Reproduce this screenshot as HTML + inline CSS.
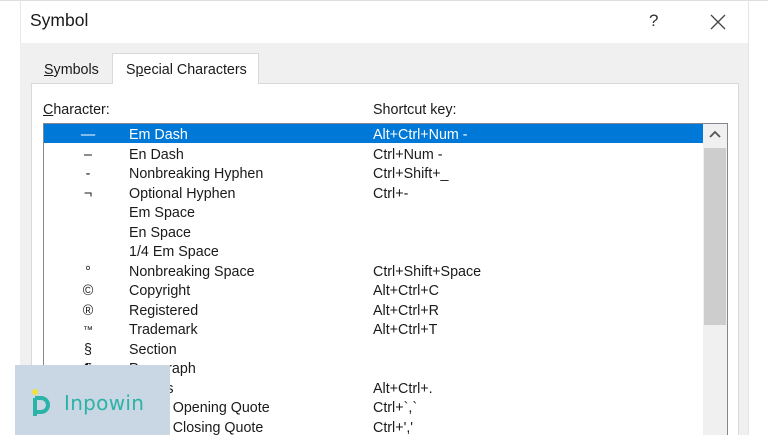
<!DOCTYPE html>
<html><head><meta charset="utf-8"><style>
*{margin:0;padding:0;box-sizing:border-box}
body{width:768px;height:435px;overflow:hidden;background:#fff;position:relative;font-family:"Segoe UI","Liberation Sans",sans-serif;color:#1a1a1a}
.a{position:absolute}
.row{position:absolute;left:44px;width:659px;height:19.5px;font-size:14.3px;line-height:19.5px}
.row span{position:absolute;white-space:nowrap;top:2px}
.s{left:36px;width:16px;text-align:center}
.n{left:85px}
.k{left:329px}
</style></head><body>
<div class="a" style="left:0;top:0;width:768px;height:1px;background:#ddd"></div>
<div class="a" style="left:20px;top:0;width:1px;height:435px;background:#e6e6e6"></div>
<div class="a" style="left:20px;top:43px;width:728px;height:392px;background:#f0f0f0"></div>
<div class="a" style="left:748px;top:0;width:1px;height:435px;background:#e4e4e4"></div>
<div class="a" style="left:30px;top:10px;font-size:17.5px">Symbol</div>
<div class="a" style="left:649px;top:11px;font-size:17px;color:#333">?</div>
<svg class="a" style="left:710px;top:14px" width="16" height="16"><path d="M1 1L15 15M15 1L1 15" stroke="#444" stroke-width="1.3"/></svg>
<div class="a" style="left:31px;top:83px;width:708px;height:352px;background:#fff;border:1px solid #d9d9d9;border-bottom:none"></div>
<div class="a" style="left:44px;top:62px;font-size:14.3px"><u>S</u>ymbols</div>
<div class="a" style="left:112px;top:53px;width:147px;height:31px;background:#fff;border:1px solid #d9d9d9;border-bottom:none"></div>
<div class="a" style="left:126px;top:62px;font-size:14.3px">S<u>p</u>ecial Characters</div>
<div class="a" style="left:43px;top:102px;font-size:14.3px"><u>C</u>haracter:</div>
<div class="a" style="left:373px;top:102px;font-size:14.3px">Shortcut key:</div>
<div class="a" style="left:43px;top:123px;width:685px;height:312px;border:1px solid #828790;border-bottom:none"></div>
<div class="a" style="left:703px;top:124px;width:24px;height:311px;background:#f0f0f0"></div>
<div class="a" style="left:704px;top:148px;width:22px;height:177px;background:#cdcdcd"></div>
<svg class="a" style="left:709px;top:130px" width="12" height="10"><path d="M1 7L6 2L11 7" stroke="#555" stroke-width="1.8" fill="none"/></svg>
<div class="a" style="left:44px;top:124px;width:659px;height:19px;background:#0078d7"></div>

<div class="row" style="top:124px;color:#fff"><span class="s">—</span><span class="n">Em Dash</span><span class="k">Alt+Ctrl+Num -</span></div>
<div class="row" style="top:143.5px"><span class="s">–</span><span class="n">En Dash</span><span class="k">Ctrl+Num -</span></div>
<div class="row" style="top:163px"><span class="s">-</span><span class="n">Nonbreaking Hyphen</span><span class="k">Ctrl+Shift+_</span></div>
<div class="row" style="top:182.5px"><span class="s">¬</span><span class="n">Optional Hyphen</span><span class="k">Ctrl+-</span></div>
<div class="row" style="top:202px"><span class="n">Em Space</span></div>
<div class="row" style="top:221.5px"><span class="n">En Space</span></div>
<div class="row" style="top:241px"><span class="n">1/4 Em Space</span></div>
<div class="row" style="top:260.5px"><span class="s">°</span><span class="n">Nonbreaking Space</span><span class="k">Ctrl+Shift+Space</span></div>
<div class="row" style="top:280px"><span class="s">©</span><span class="n">Copyright</span><span class="k">Alt+Ctrl+C</span></div>
<div class="row" style="top:299.5px"><span class="s">®</span><span class="n">Registered</span><span class="k">Alt+Ctrl+R</span></div>
<div class="row" style="top:319px"><span class="s" style="font-size:10px">™</span><span class="n">Trademark</span><span class="k">Alt+Ctrl+T</span></div>
<div class="row" style="top:338.5px"><span class="s">§</span><span class="n">Section</span></div>
<div class="row" style="top:358px"><span class="s">¶</span><span class="n">Paragraph</span></div>
<div class="row" style="top:377.5px"><span class="s">…</span><span class="n">Ellipsis</span><span class="k">Alt+Ctrl+.</span></div>
<div class="row" style="top:397px"><span class="s">‘</span><span class="n">Single Opening Quote</span><span class="k">Ctrl+`,`</span></div>
<div class="row" style="top:416.5px"><span class="s">’</span><span class="n">Single Closing Quote</span><span class="k">Ctrl+','</span></div>

<div class="a" style="left:15px;top:365px;width:155px;height:70px;background:#c9d6e3"></div>
<svg class="a" style="left:31px;top:389px" width="24" height="30"><circle cx="4" cy="3" r="3" fill="#f0e040"/><path d="M4 9V27M4 9H10A7 7 0 0 1 10 23H4" stroke="#2cb3a8" stroke-width="4" fill="none"/></svg>
<div class="a" style="left:64px;top:391px;font-size:20px;color:#2cb3a8;letter-spacing:0.3px;font-family:'DejaVu Sans',sans-serif">Inpowin</div>
</body></html>
